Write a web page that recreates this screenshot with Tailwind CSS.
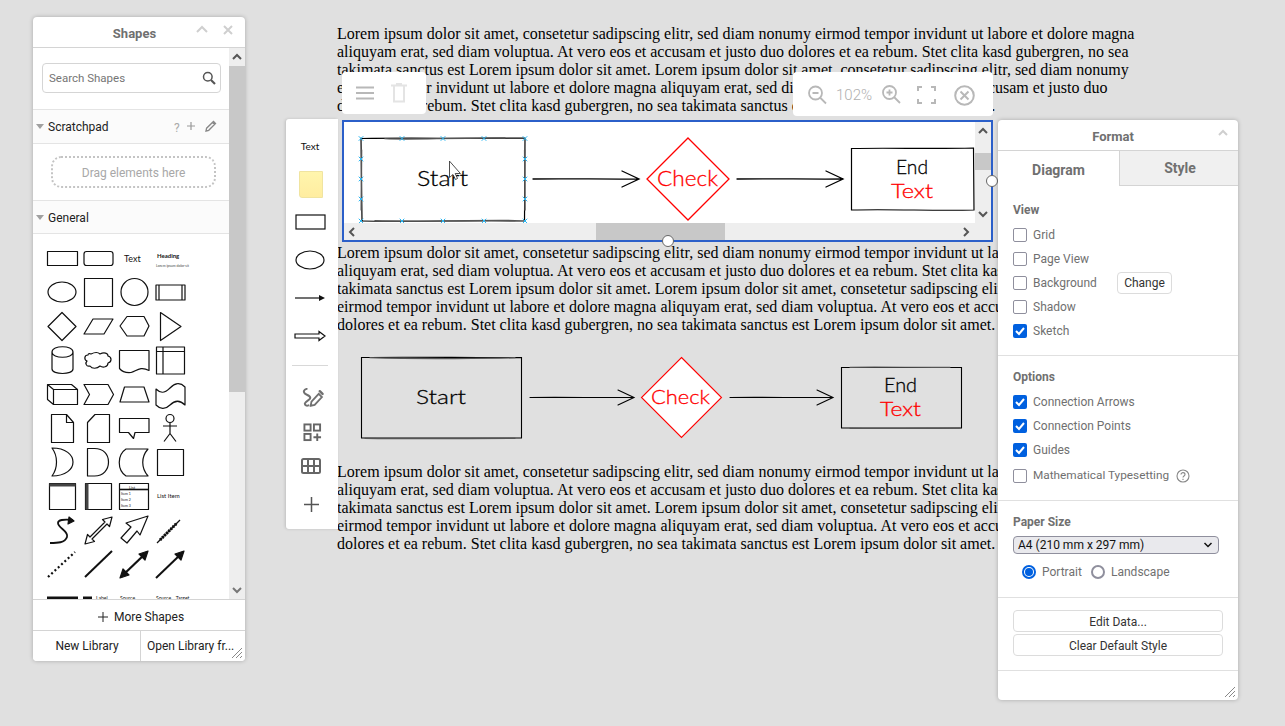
<!DOCTYPE html>
<html lang="en">
<head>
<meta charset="utf-8">
<title>Sketch diagram editor</title>
<script src="https://cdn.jsdelivr.net/npm/@tailwindcss/browser@4"></script>
</head>
<body class="bg-[#e0e0e0] w-[1285px] h-[726px] overflow-hidden relative font-['Roboto','Open_Sans',sans-serif]">

<!-- Page content -->
<main class="absolute left-[337px] top-[25px] w-[808px] font-['Liberation_Serif',serif] text-[16px] leading-[18px] text-black">
  <p>Lorem ipsum dolor sit amet, consetetur sadipscing elitr, sed diam nonumy eirmod tempor invidunt ut labore et dolore magna aliquyam erat, sed diam voluptua. At vero eos et accusam et justo duo dolores et ea rebum. Stet clita kasd gubergren, no sea takimata sanctus est Lorem ipsum dolor sit amet. Lorem ipsum dolor sit amet, consetetur sadipscing elitr, sed diam nonumy eirmod tempor invidunt ut labore et dolore magna aliquyam erat, sed diam voluptua. At vero eos et accusam et justo duo dolores et ea rebum. Stet clita kasd gubergren, no sea takimata sanctus est Lorem ipsum dolor sit amet.</p>

  <div class="relative mt-[5px] mb-[2px] ml-[5px] w-[651px] h-[122px] bg-white border-2 border-[#2b5fc9] flex flex-col">
    <div class="flex flex-1 min-h-0">
      <svg class="block shrink-0" width="631" height="101" viewBox="344 122 631 101" fill="none" stroke="#000" stroke-linecap="round">
        <path d="M361 138.500C420 137.500 470 139 525 138M361 138l1 83M525 138l-.5 83M361 221c55 1 110-1 164 0" stroke-width="1.200"/>
        <path d="M385 138.600c30 1.400 60-1 120-.6M361.600 150l-.4 60M524.600 150l.4 60M375 220.800c50 1 90-.6 140-.2" stroke="#555" stroke-width="1.400"/>
        <text x="417" y="186" textLength="51" lengthAdjust="spacingAndGlyphs" font-family="Lato, sans-serif" font-weight="300" font-size="21" fill="#000" stroke="#000" stroke-width=".3">Start</text>
        <path d="M533 179c35-.6 70 .4 105 0M622 171l17 8-17 8" stroke-width="1.300"/>
        <path d="M688 138l41 41-41 41-41-41z" stroke="#f00" stroke-width="1.300"/>
        <text x="657" y="186" textLength="61" lengthAdjust="spacingAndGlyphs" font-family="Lato, sans-serif" font-weight="300" font-size="21" fill="#f00" stroke="#f00" stroke-width=".3">Check</text>
        <path d="M737 179c35-.6 70 .4 106 0M826 171l17 8-17 8" stroke-width="1.300"/>
        <path d="M851.500 148.500c40-.8 80 .6 122-.5l.5 62c-40 1-80-1-122.500 0z" stroke-width="1.200"/>
        <text x="896" y="174" textLength="32" lengthAdjust="spacingAndGlyphs" font-family="Lato, sans-serif" font-weight="300" font-size="20" fill="#000" stroke="#000" stroke-width=".3">End</text>
        <text x="891" y="198" textLength="42" lengthAdjust="spacingAndGlyphs" font-family="Lato, sans-serif" font-weight="300" font-size="20" fill="#f00" stroke="#f00" stroke-width=".3">Text</text>
        <g stroke="#29b6f2" stroke-width="1">
          <path d="M400 136.500l4 4M404 136.500l-4 4M441 136.500l4 4M445 136.500l-4 4M482 136.500l4 4M486 136.500l-4 4"/>
          <path d="M400 219l4 4M404 219l-4 4M441 219l4 4M445 219l-4 4M482 219l4 4M486 219l-4 4"/>
          <path d="M359 157l4 4M363 157l-4 4M359 177l4 4M363 177l-4 4M359 197l4 4M363 197l-4 4"/>
          <path d="M523 157l4 4M527 157l-4 4M523 177l4 4M527 177l-4 4M523 197l4 4M527 197l-4 4"/>
          <path d="M359 136.500l4 4M363 136.500l-4 4M523 136.500l4 4M527 136.500l-4 4M359 219l4 4M363 219l-4 4M523 219l4 4M527 219l-4 4"/>
        </g>
        <path d="M449.500 161.500v16l3.500-3 2.500 5 2-1-2.300-5h4.800z" fill="#fff" stroke="#222" stroke-width=".8" stroke-linejoin="round"/>
      </svg>
      <div class="w-[16px] bg-[#eeeeee] flex flex-col items-center">
        <svg class="mt-[3px]" width="12" height="12" viewBox="0 0 12 12" fill="none" stroke="#555" stroke-width="2"><path d="M2 8l4-4 4 4"/></svg>
        <div class="w-full h-[17px] bg-[#c8c8c8] mt-[16px]"></div>
        <svg class="mt-auto mb-[3px]" width="12" height="12" viewBox="0 0 12 12" fill="none" stroke="#555" stroke-width="2"><path d="M2 4l4 4 4-4"/></svg>
      </div>
    </div>
    <div class="h-[17px] bg-[#eeeeee] flex items-center relative shrink-0">
      <svg class="ml-[2px]" width="12" height="12" viewBox="0 0 12 12" fill="none" stroke="#555" stroke-width="2"><path d="M8 2L4 6l4 4"/></svg>
      <div class="absolute left-[252px] top-0 w-[129px] h-full bg-[#c8c8c8]"></div>
      <svg class="absolute left-[616px] top-[3px]" width="12" height="12" viewBox="0 0 12 12" fill="none" stroke="#555" stroke-width="2"><path d="M4 2l4 4-4 4"/></svg>
    </div>
    <span class="absolute left-[318px] top-[113px] w-[12px] h-[12px] rounded-full bg-white border border-[#666]"></span>
    <span class="absolute left-[642px] top-[53px] w-[12px] h-[12px] rounded-full bg-white border border-[#666]"></span>
  </div>

  <p>Lorem ipsum dolor sit amet, consetetur sadipscing elitr, sed diam nonumy eirmod tempor invidunt ut labore et dolore magna aliquyam erat, sed diam voluptua. At vero eos et accusam et justo duo dolores et ea rebum. Stet clita kasd gubergren, no sea takimata sanctus est Lorem ipsum dolor sit amet. Lorem ipsum dolor sit amet, consetetur sadipscing elitr, sed diam nonumy eirmod tempor invidunt ut labore et dolore magna aliquyam erat, sed diam voluptua. At vero eos et accusam et justo duo dolores et ea rebum. Stet clita kasd gubergren, no sea takimata sanctus est Lorem ipsum dolor sit amet.</p>

  <svg class="block" width="808" height="129" viewBox="337 334 808 129" fill="none" stroke="#000" stroke-linecap="round">
    <path d="M361.500 357.500c50-1 110 .5 160 0v80.500h-160z" stroke-width="1.100"/>
    <path d="M370 357.700c50 1.500 100 1 145 0M365 438.300c50 .6 100 .3 150 0" stroke="#555" stroke-width="1.200"/>
    <text x="416" y="404" textLength="50" lengthAdjust="spacingAndGlyphs" font-family="Lato, sans-serif" font-weight="300" font-size="20" fill="#000" stroke="#000" stroke-width=".3">Start</text>
    <path d="M530 397.500c35-.4 70 .3 103 0M618 390l16 7.500-16 7.500" stroke-width="1.100"/>
    <path d="M681.500 357.500l40 40-40 40-40-40z" fill="#fff" stroke="#f00" stroke-width="1.100"/>
    <text x="651" y="404" textLength="59" lengthAdjust="spacingAndGlyphs" font-family="Lato, sans-serif" font-weight="300" font-size="20" fill="#f00" stroke="#f00" stroke-width=".3">Check</text>
    <path d="M730 397.500c35-.4 70 .3 103 0M817 390l16 7.500-16 7.500" stroke-width="1.100"/>
    <path d="M841.500 367.500h120v60.500h-120z" stroke-width="1.100"/>
    <path d="M850 367.300c30-.5 70 .3 100 0M850 428.300c30 .6 70 0 110-.2" stroke="#555" stroke-width="1.200"/>
    <text x="884" y="392" textLength="33" lengthAdjust="spacingAndGlyphs" font-family="Lato, sans-serif" font-weight="300" font-size="19" fill="#000" stroke="#000" stroke-width=".3">End</text>
    <text x="880" y="416" textLength="41" lengthAdjust="spacingAndGlyphs" font-family="Lato, sans-serif" font-weight="300" font-size="19" fill="#f00" stroke="#f00" stroke-width=".3">Text</text>
  </svg>

  <p>Lorem ipsum dolor sit amet, consetetur sadipscing elitr, sed diam nonumy eirmod tempor invidunt ut labore et dolore magna aliquyam erat, sed diam voluptua. At vero eos et accusam et justo duo dolores et ea rebum. Stet clita kasd gubergren, no sea takimata sanctus est Lorem ipsum dolor sit amet. Lorem ipsum dolor sit amet, consetetur sadipscing elitr, sed diam nonumy eirmod tempor invidunt ut labore et dolore magna aliquyam erat, sed diam voluptua. At vero eos et accusam et justo duo dolores et ea rebum. Stet clita kasd gubergren, no sea takimata sanctus est Lorem ipsum dolor sit amet.</p>
</main>

<!-- Shapes panel -->
<aside class="absolute left-[33px] top-[17px] w-[212px] h-[644px] bg-white rounded-[4px] shadow-[0_0_4px_rgba(0,0,0,0.25)] flex flex-col overflow-hidden text-[12px] text-[#222]">
  <header class="h-[31px] shrink-0 border-b border-[#d4d4d4] relative flex items-center justify-center font-bold text-[#707070] text-[13px] pt-[3px] pr-[9px]">
    <span>Shapes</span>
    <svg class="absolute left-[162px] top-[7px]" width="14" height="10" viewBox="0 0 14 10" fill="none" stroke="#cfcfcf" stroke-width="2"><path d="M2 8l5-5 5 5"/></svg>
    <svg class="absolute left-[189px] top-[7px]" width="12" height="12" viewBox="0 0 12 12" fill="none" stroke="#cfcfcf" stroke-width="2"><path d="M2 2l8 8M10 2l-8 8"/></svg>
  </header>
  <div class="flex flex-1 min-h-0">
    <div class="w-[196px] shrink-0 flex flex-col overflow-hidden">
      <div class="h-[61px] shrink-0 pt-[15px] pl-[9px]">
        <div class="w-[179px] h-[30px] border border-[#d5d5d5] rounded-[4px] flex items-center justify-between pl-[6px] pr-[4px] text-[#757575] text-[11.500px]">
          <span class="pt-[2px]">Search Shapes</span>
          <svg width="14" height="14" viewBox="0 0 14 14" fill="none" stroke="#555" stroke-width="1.500"><circle cx="5.800" cy="5.800" r="4.300"/><path d="M9 9l4 4" stroke-width="2.200"/></svg>
        </div>
      </div>
      <div class="h-[35px] shrink-0 bg-[#fbfbfb] border-y border-[#e4e4e4] flex items-center relative">
        <span class="ml-[3px] w-0 h-0 border-x-[4px] border-x-transparent border-t-[5px] border-t-[#a0a0a0]"></span>
        <span class="ml-[4px] pt-[1px]">Scratchpad</span>
        <span class="absolute left-[141px] top-[9px] text-[#aaa]">?</span>
        <svg class="absolute left-[153px] top-[11px]" width="10" height="10" viewBox="0 0 10 10" stroke="#999" stroke-width="1.200"><path d="M5 1v8M1 5h8"/></svg>
        <svg class="absolute left-[171px] top-[10px]" width="13" height="13" viewBox="0 0 13 13" fill="none" stroke="#888" stroke-width="1.300"><path d="M2 11l.6-2.800L9.500 1.500l2 2-6.800 6.800zM8.500 2.500l2 2"/></svg>
      </div>
      <div class="h-[56px] shrink-0 pt-[12px] pl-[18px]">
        <div class="w-[165px] h-[32px] rounded-[10px] border-2 border-dotted border-[#c4c4c4] flex items-center justify-center text-[#a8a8a8] pt-[1px]">Drag elements here</div>
      </div>
      <div class="h-[34px] shrink-0 bg-[#fbfbfb] border-y border-[#e4e4e4] flex items-center">
        <span class="ml-[3px] w-0 h-0 border-x-[4px] border-x-transparent border-t-[5px] border-t-[#a0a0a0]"></span>
        <span class="ml-[4px] pt-[2px]">General</span>
      </div>
      <svg class="block shrink-0" width="196" height="365" viewBox="33 234 196 365" fill="none" stroke="#111" stroke-width="1.200" stroke-linejoin="round">
        <rect x="47.500" y="251.500" width="30" height="14"/>
        <rect x="84" y="251.500" width="29" height="14" rx="2.500"/>
        <text x="124" y="262" font-family="Lato, sans-serif" font-size="9" fill="#111" stroke="none">Text</text>
        <text x="157" y="258" font-family="Lato, sans-serif" font-size="6" font-weight="700" fill="#111" stroke="none">Heading</text>
        <text x="156" y="266.500" font-family="Lato, sans-serif" font-size="3.500" fill="#444" stroke="none">Lorem ipsum dolor sit</text>
        <ellipse cx="62" cy="292" rx="14" ry="10"/>
        <rect x="84.500" y="278.500" width="28" height="28"/>
        <circle cx="134.500" cy="292" r="13.500"/>
        <path d="M156 285h29v15h-29zM159 285v15M182 285v15"/>
        <path d="M62 312.500l14 14-14 14-14-14z"/>
        <path d="M84 334l9-15h20l-9 15z"/>
        <path d="M120 326l7-9.500h17l5 9.500-5 10h-17z"/>
        <path d="M160.500 312.500l20.500 14-20.500 14z"/>
        <path d="M52 352v17c0 6 21 6 21 0v-17M52 352c0-7 21-7 21 0s-21 7-21 0z"/>
        <path d="M91 354c4-2 7-2 9 0 4-2 8-1 8 2 4 1 4 6 0 7 0 4-5 5-8 3-3 3-8 3-10 0-4 1-5-3-3-5-3-1-3-6 1-6 0-1 1-2 3-1z"/>
        <path d="M119.500 350.500h29.500v20c-9-5-13 1-18 2-5 .5-9-1-11.500-4z"/>
        <path d="M156.500 347h28v27h-28zM163 347v27M156.500 351.500h28"/>
        <path d="M47.500 384.500h24l6 5v15h-24l-6-5zM53.500 389.500h24M53.500 389.500v15M47.500 384.500l6 5"/>
        <path d="M84 384.500h24l5.500 10-5.500 10h-24l5.500-10z"/>
        <path d="M120 402l4.500-15h19.500l5 15z"/>
        <path d="M156 389c5 5 9 4 14-1 5-5 10-6 15-1v18c-5-5-10-5-15 0-5 5-10 4-14 0z"/>
        <path d="M51.500 414.500h15l7 8v20h-22zM66.500 414.500v8h7"/>
        <path d="M95 414.500h14.500v28h-22v-20z"/>
        <path d="M119.500 418.500h29.500v14h-14l-1.500 6-5-6h-9z"/>
        <path d="M166 418.500a4 4 0 1 0 8 0a4 4 0 1 0 -8 0M170 422.500v11M163 426h14M170 433.500l-6 8M170 433.500l6 8"/>
        <path d="M52 448c14 0 21 7 21 14s-7 14-21 14c6-8 6-20 0-28z"/>
        <path d="M87.500 448.500h7c9 0 14 6 14 13.500s-5 14-14 14h-7z"/>
        <path d="M126 449h22c-7 8-7 19 0 27h-22c-9-6-9-21 0-27z"/>
        <rect x="157.500" y="449.500" width="26" height="26"/>
        <rect x="49.500" y="483.500" width="26" height="26"/>
        <path d="M49.500 485h26" stroke-width="3" stroke="#444"/>
        <rect x="85.500" y="483.500" width="26" height="26"/>
        <path d="M87 483.500v26" stroke-width="3" stroke="#444"/>
        <rect x="119.500" y="483.500" width="29" height="26"/>
        <path d="M119.500 489.500h29" stroke-width="1.600"/>
        <text x="129" y="488.500" font-family="Lato, sans-serif" font-size="4" fill="#111" stroke="none">List</text>
        <text x="121" y="495" font-family="Lato, sans-serif" font-size="3.500" fill="#111" stroke="none">Item 1</text>
        <text x="121" y="501" font-family="Lato, sans-serif" font-size="3.500" fill="#111" stroke="none">Item 2</text>
        <text x="121" y="507" font-family="Lato, sans-serif" font-size="3.500" fill="#111" stroke="none">Item 3</text>
        <text x="157" y="498" font-family="Lato, sans-serif" font-size="6" fill="#111" stroke="none">List Item</text>
        <path d="M50 543c7 0 15 0 17-6 2-6-9-9-9-14 0-3 5-4 15-3" stroke-width="1.800"/>
        <path d="M74 521l-5-4-1 7z" fill="#111"/>
        <path d="M85 544l9.500-2.500-2.500-2.500 15-15 2.500 2.500 2.500-9.500-9.500 2.500 2.500 2.500-15 15-2.500-2.500z"/>
        <path d="M148 516l-8 19-3-4-10 12-6-5 10-11-5-4z"/>
        <path d="M157 543l23-23" stroke-width="1.200"/>
        <path d="M160 540l17-17" stroke-width="3" stroke-dasharray="2 1"/>
        <path d="M48 577l27-25" stroke-width="2.200" stroke-dasharray="2 2.500"/>
        <path d="M85 577l27-26" stroke-width="2"/>
        <path d="M123 575l22-21" stroke-width="2.200"/>
        <path d="M120 578l9-3-6-6zM148 551l-9 3 6 6z" fill="#111"/>
        <path d="M156 578l25-24" stroke-width="2"/>
        <path d="M184 551l-9 3 6 6z" fill="#111"/>
        <path d="M47 598h31" stroke-width="3"/>
        <path d="M83 598h9" stroke-width="3"/>
        <text x="96" y="600" font-family="Lato, sans-serif" font-size="5" fill="#111" stroke="none">Label</text>
        <text x="120" y="600" font-family="Lato, sans-serif" font-size="5" fill="#111" stroke="none">Source...</text>
        <text x="156" y="600" font-family="Lato, sans-serif" font-size="5" fill="#111" stroke="none">Source... Target</text>
      </svg>
    </div>
    <div class="w-[16px] bg-[#eeeeee] flex flex-col items-center">
      <div class="h-[18px] shrink-0 flex items-center justify-center">
        <svg width="12" height="10" viewBox="0 0 12 10" fill="none" stroke="#555" stroke-width="2"><path d="M2 7l4-4 4 4"/></svg>
      </div>
      <div class="w-full h-[326px] shrink-0 bg-[#c8c8c8]"></div>
      <svg class="mt-auto mb-[4px]" width="12" height="10" viewBox="0 0 12 10" fill="none" stroke="#777" stroke-width="2"><path d="M2 3l4 4 4-4"/></svg>
    </div>
  </div>
  <div class="h-[31px] shrink-0 border-t border-[#d4d4d4] flex items-center justify-center gap-[6px] pl-[4px] pt-[3px] bg-white">
    <svg width="10" height="10" viewBox="0 0 10 10" stroke="#222" stroke-width="1"><path d="M5 0v10M0 5h10"/></svg>
    <span>More Shapes</span>
  </div>
  <div class="h-[31px] shrink-0 border-t border-[#d4d4d4] flex items-center relative bg-white">
    <div class="w-[108px] h-full border-r border-[#d4d4d4] flex items-center justify-center pl-[1px]">New Library</div>
    <div class="flex-1 h-full flex items-center pl-[6px]">Open Library fr...</div>
    <svg class="absolute right-[2px] bottom-[2px]" width="12" height="12" viewBox="0 0 12 12" stroke="#888" stroke-width="1"><path d="M1 11L11 1M5 11l6-6M9 11l2-2"/></svg>
  </div>
</aside>

<!-- Left toolbar -->
<nav class="absolute left-[286px] top-[119px] w-[52px] h-[410px] bg-white rounded-l-[3px] shadow-[-1px_0_3px_rgba(0,0,0,0.15)] pt-[8px] pr-[4px] flex flex-col items-center">
  <div class="h-[38px] flex items-center justify-center font-['Lato',sans-serif] text-[10px] text-[#111] shrink-0 w-full">Text</div>
  <div class="h-[38px] flex items-center justify-center shrink-0 w-full pl-[2px]">
    <div class="w-[24px] h-[27px] bg-gradient-to-b from-[#fff5ad] to-[#ffeda0] border border-[#f0e4a0] rounded-bl-[3px]"></div>
  </div>
  <div class="h-[38px] flex items-center justify-center shrink-0 w-full">
    <svg width="31" height="16" viewBox="0 0 31 16" fill="none" stroke="#111" stroke-width="1.200"><rect x="1" y="1" width="29" height="14"/></svg>
  </div>
  <div class="h-[38px] flex items-center justify-center shrink-0 w-full">
    <svg width="30" height="20" viewBox="0 0 30 20" fill="none" stroke="#111" stroke-width="1.200"><ellipse cx="15" cy="10" rx="14" ry="9"/></svg>
  </div>
  <div class="h-[38px] flex items-center justify-center shrink-0 w-full">
    <svg width="32" height="10" viewBox="0 0 32 10"><path d="M1 5h26" stroke="#111" stroke-width="1.200"/><path d="M31 5l-6-3v6z" fill="#111"/></svg>
  </div>
  <div class="h-[38px] flex items-center justify-center shrink-0 w-full">
    <svg width="32" height="12" viewBox="0 0 32 12" fill="none" stroke="#111" stroke-width="1.200"><path d="M1 4h24V1.500L31 6l-6 4.500V8H1z"/></svg>
  </div>
  <div class="mt-[10px] w-[36px] border-t border-[#d8d8d8] shrink-0 mb-[15px]"></div>
  <div class="h-[34px] flex items-center justify-center shrink-0 w-full pl-[5px]">
    <svg width="22" height="20" viewBox="0 0 24 22" fill="none" stroke="#707070" stroke-width="2.200" stroke-linecap="round"><path d="M5 1C2 2 1 4 3 6c2 2 6 2 6 5 0 2-5 3-6 6 0 2 2 3 4 2"/><path d="M9.500 19.500l.8-4.500 8-8.500 3.500 3.500-8 8.500z" stroke-width="2"/><path d="M19.500 3.500l3 3" stroke-width="2.600"/></svg>
  </div>
  <div class="h-[34px] flex items-center justify-center shrink-0 w-full pl-[4px]">
    <svg width="19" height="19" viewBox="0 0 20 20" fill="none" stroke="#666" stroke-width="2"><rect x="1.500" y="1.500" width="6.500" height="6.500"/><rect x="11.500" y="1.500" width="6.500" height="6.500"/><rect x="1.500" y="11.500" width="6.500" height="6.500"/><path d="M15 11v8M11 15h8"/></svg>
  </div>
  <div class="h-[34px] flex items-center justify-center shrink-0 w-full pl-[2px]">
    <svg width="20" height="16" viewBox="0 0 20 16" fill="none" stroke="#666" stroke-width="2"><rect x="1" y="1" width="18" height="14" rx="1.500"/><path d="M1 8h18M7 1v14M13 1v14"/></svg>
  </div>
  <div class="h-[34px] mt-[4px] flex items-center justify-center shrink-0 w-full pl-[2px]">
    <svg width="15" height="15" viewBox="0 0 15 15" stroke="#555" stroke-width="1.500"><path d="M7.500 0v15M0 7.500h15"/></svg>
  </div>
</nav>

<!-- Hamburger / delete toolbar -->
<div class="absolute left-[342px] top-[72px] w-[84px] h-[42px] bg-white rounded-[4px] flex items-center gap-[16px] pl-[13px]">
  <svg width="20" height="14" viewBox="0 0 20 14" stroke="#b8b8b8" stroke-width="2"><path d="M1 1.500h18M1 7h18M1 12.500h18"/></svg>
  <svg width="16" height="20" viewBox="0 0 16 20" fill="none" stroke="#e4e4e4" stroke-width="2"><path d="M0 2.500h16M3 3v15.500h10V3M5 1h6"/></svg>
</div>

<!-- Zoom toolbar -->
<div class="absolute left-[793px] top-[72px] w-[200px] h-[44px] bg-white rounded-[4px] flex items-center pl-[15px] pt-[2px] text-[15px] text-[#b0b0b0]">
  <svg width="19" height="20" viewBox="0 0 19 20" fill="none" stroke="#b8b8b8" stroke-width="1.800"><circle cx="7.500" cy="8" r="6.500"/><path d="M4.500 8h6M12 12.500l6 6"/></svg>
  <span class="ml-[9px] w-[36px] text-center font-light whitespace-nowrap pt-[1px]">102%</span>
  <svg class="ml-[10px]" width="19" height="20" viewBox="0 0 19 20" fill="none" stroke="#b8b8b8" stroke-width="1.800"><circle cx="7.500" cy="7.500" r="6.500"/><path d="M4.500 7.500h6M7.500 4.500v6M12 12l6 6"/></svg>
  <svg class="ml-[16px]" width="19" height="18" viewBox="0 0 19 18" fill="none" stroke="#b8b8b8" stroke-width="2"><path d="M1 5V1h4M14 1h4v4M18 13v4h-4M5 17H1v-4"/></svg>
  <svg class="ml-[18px]" width="21" height="21" viewBox="0 0 21 21" fill="none" stroke="#b8b8b8" stroke-width="2"><circle cx="10.500" cy="10.500" r="9.300"/><path d="M6.500 6.500l8 8M14.500 6.500l-8 8"/></svg>
</div>

<!-- Format panel -->
<aside class="absolute left-[998px] top-[120px] w-[240px] h-[580px] bg-white rounded-[4px] shadow-[0_0_4px_rgba(0,0,0,0.25)] flex flex-col text-[12px] text-[#707070] overflow-hidden">
  <header class="h-[31px] shrink-0 border-b border-[#d4d4d4] flex items-center justify-center font-bold text-[13px] relative pt-[3px] pr-[10px]">
    Format
    <svg class="absolute left-[219px] top-[8px]" width="12" height="9" viewBox="0 0 12 9" fill="none" stroke="#cfcfcf" stroke-width="2"><path d="M2 7l4-4 4 4"/></svg>
  </header>
  <div class="h-[35px] shrink-0 flex font-bold text-[14px]">
    <div class="w-[121px] flex items-center justify-center pt-[3px]">Diagram</div>
    <div class="flex-1 flex items-center justify-center bg-[#f0f0f0] border-l border-b border-[#d4d4d4] pl-[2px] pt-[1px]">Style</div>
  </div>
  <section class="h-[170px] shrink-0 border-b border-[#e0e0e0] pl-[15px] pt-[12px]">
    <h3 class="font-bold h-[25px] leading-[24px]">View</h3>
    <div class="flex items-center h-[24px] gap-[6px]"><span class="w-[14px] h-[14px] border-[1.500px] border-[#8f8f9d] rounded-[2px]"></span>Grid</div>
    <div class="flex items-center h-[24px] gap-[6px]"><span class="w-[14px] h-[14px] border-[1.500px] border-[#8f8f9d] rounded-[2px]"></span>Page View</div>
    <div class="flex items-center h-[24px] gap-[6px]"><span class="w-[14px] h-[14px] border-[1.500px] border-[#8f8f9d] rounded-[2px]"></span><span class="w-[78px]">Background</span><span class="w-[55px] h-[22px] border border-[#dcdcdc] rounded-[4px] text-[#333] flex items-center justify-center">Change</span></div>
    <div class="flex items-center h-[24px] gap-[6px]"><span class="w-[14px] h-[14px] border-[1.500px] border-[#8f8f9d] rounded-[2px]"></span>Shadow</div>
    <div class="flex items-center h-[24px] gap-[6px]">
      <span class="w-[14px] h-[14px] bg-[#0060df] rounded-[2px] flex items-center justify-center"><svg width="10" height="10" viewBox="0 0 10 10" fill="none" stroke="#fff" stroke-width="2"><path d="M1 5l3 3 5-6"/></svg></span>Sketch</div>
  </section>
  <section class="h-[145px] shrink-0 border-b border-[#e0e0e0] pl-[15px] pt-[9px]">
    <h3 class="font-bold h-[24px] leading-[24px]">Options</h3>
    <div class="flex items-center h-[24px] mt-[1px] gap-[6px]"><span class="w-[14px] h-[14px] bg-[#0060df] rounded-[2px] flex items-center justify-center"><svg width="10" height="10" viewBox="0 0 10 10" fill="none" stroke="#fff" stroke-width="2"><path d="M1 5l3 3 5-6"/></svg></span>Connection Arrows</div>
    <div class="flex items-center h-[24px] gap-[6px]"><span class="w-[14px] h-[14px] bg-[#0060df] rounded-[2px] flex items-center justify-center"><svg width="10" height="10" viewBox="0 0 10 10" fill="none" stroke="#fff" stroke-width="2"><path d="M1 5l3 3 5-6"/></svg></span>Connection Points</div>
    <div class="flex items-center h-[24px] gap-[6px]"><span class="w-[14px] h-[14px] bg-[#0060df] rounded-[2px] flex items-center justify-center"><svg width="10" height="10" viewBox="0 0 10 10" fill="none" stroke="#fff" stroke-width="2"><path d="M1 5l3 3 5-6"/></svg></span>Guides</div>
    <div class="flex items-center h-[26px] mt-[1px] gap-[6px]"><span class="w-[14px] h-[14px] border-[1.500px] border-[#8f8f9d] rounded-[2px]"></span><span class="w-[136px] whitespace-nowrap text-[11.800px]">Mathematical Typesetting</span>
      <svg class="ml-[1px]" width="14" height="14" viewBox="0 0 14 14" fill="none" stroke="#888" stroke-width="1.100"><circle cx="7" cy="7" r="6"/><path d="M5 5.500c0-2.500 4-2.500 4 0 0 1.500-2 1.500-2 3M7 9.800v1.200"/></svg>
    </div>
  </section>
  <section class="h-[97px] shrink-0 border-b border-[#e0e0e0] pl-[15px] pt-[9px]">
    <h3 class="font-bold h-[24px] leading-[24px]">Paper Size</h3>
    <div class="w-[206px] h-[18px] mt-[2px] bg-[#e9e9ed] border border-[#8f8f9d] rounded-[4px] flex items-center justify-between pl-[4px] pr-[5px] text-[#111]">
      <span>A4 (210 mm x 297 mm)</span>
      <svg width="10" height="8" viewBox="0 0 10 8" fill="none" stroke="#111" stroke-width="1.500"><path d="M1.500 2l3.500 3.500L8.500 2"/></svg>
    </div>
    <div class="flex items-center h-[18px] mt-[9px] pl-[9px]">
      <span class="w-[14px] h-[14px] rounded-full border-[2px] border-[#0060df] flex items-center justify-center"><span class="w-[8px] h-[8px] rounded-full bg-[#0060df]"></span></span>
      <span class="ml-[6px] w-[49px]">Portrait</span>
      <span class="w-[14px] h-[14px] rounded-full border-[2px] border-[#8f8f9d]"></span>
      <span class="ml-[6px]">Landscape</span>
    </div>
  </section>
  <section class="h-[73px] shrink-0 border-b border-[#e0e0e0] pl-[15px] pt-[12px] text-[#333]">
    <div class="w-[210px] h-[22px] border border-[#dcdcdc] rounded-[4px] flex items-center justify-center pt-[1px]">Edit Data...</div>
    <div class="w-[210px] h-[22px] mt-[2px] border border-[#dcdcdc] rounded-[4px] flex items-center justify-center pt-[1px]">Clear Default Style</div>
  </section>
  <footer class="flex-1 relative">
    <svg class="absolute right-[2px] bottom-[2px]" width="12" height="12" viewBox="0 0 12 12" stroke="#888" stroke-width="1"><path d="M1 11L11 1M5 11l6-6M9 11l2-2"/></svg>
  </footer>
</aside>
</body>
</html>
